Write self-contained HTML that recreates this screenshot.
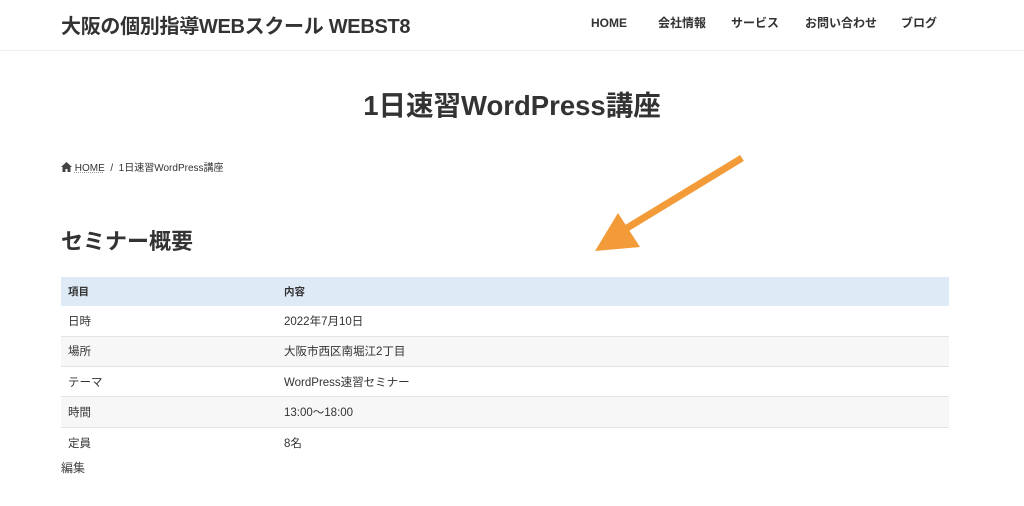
<!DOCTYPE html>
<html><head><meta charset="utf-8"><style>
*{margin:0;padding:0;box-sizing:border-box}
body{width:1024px;height:506px;background:#fff;font-family:"Liberation Sans","Noto Sans CJK JP",sans-serif;color:#333;position:relative;overflow:hidden}
.hd{position:absolute;left:0;top:0;width:1024px;height:51px;border-bottom:1px solid #eee}
.logo{position:absolute;left:61px;top:10px;font-size:20px;font-weight:bold;color:#333;letter-spacing:-0.3px}
.nav{position:absolute;top:14px;height:18px;line-height:18px;font-size:12px;font-weight:bold;color:#333}
h1{position:absolute;top:83px;left:0;width:1024px;text-align:center;font-size:27.5px;font-weight:bold;color:#333}
.bc{position:absolute;left:61px;top:159px;font-size:10px;color:#333}
.bc u{text-decoration:underline dotted #999}
h2{position:absolute;left:61px;top:224px;font-size:22px;font-weight:bold;color:#333}
table{position:absolute;left:61px;top:277px;width:888px;border-collapse:collapse;font-size:11.5px}
td{height:30.3px;padding:0 7px;border-bottom:1px solid #e3e3e3}
td:first-child{width:216px}
tr.h td{background:#deebf7;font-weight:bold;font-size:10.5px;border-bottom:none;height:29px}
tr.g td{background:#f7f7f7}
tr:last-child td{border-bottom:none}
.ed{position:absolute;left:61px;top:459px;font-size:12px;color:#444}
</style></head><body>
<div class="hd">
<div class="logo">大阪の個別指導WEBスクール WEBST8</div>
<span class="nav" style="left:591px">HOME</span>
<span class="nav" style="left:658px">会社情報</span>
<span class="nav" style="left:731px">サービス</span>
<span class="nav" style="left:805px">お問い合わせ</span>
<span class="nav" style="left:901px">ブログ</span>
</div>
<h1>1日速習WordPress講座</h1>
<div class="bc"><svg width="11" height="10" viewBox="0 0 11 10" style="vertical-align:-1px"><path d="M5.5 0L0 5h1.5v5h3V7h2v3h3V5H11z" fill="#444"/></svg> <u>HOME</u> &nbsp;/&nbsp; 1日速習WordPress講座</div>
<h2>セミナー概要</h2>
<svg style="position:absolute;left:0;top:0" width="1024" height="506"><line x1="742" y1="158" x2="622" y2="231" stroke="#f29b38" stroke-width="7"/><polygon points="595,251 618,213 640,247" fill="#f29b38"/></svg>
<table>
<tr class="h"><td>項目</td><td>内容</td></tr>
<tr><td>日時</td><td>2022年7月10日</td></tr>
<tr class="g"><td>場所</td><td>大阪市西区南堀江2丁目</td></tr>
<tr><td>テーマ</td><td>WordPress速習セミナー</td></tr>
<tr class="g"><td>時間</td><td>13:00～18:00</td></tr>
<tr><td>定員</td><td>8名</td></tr>
</table>
<div class="ed">編集</div>
</body></html>
